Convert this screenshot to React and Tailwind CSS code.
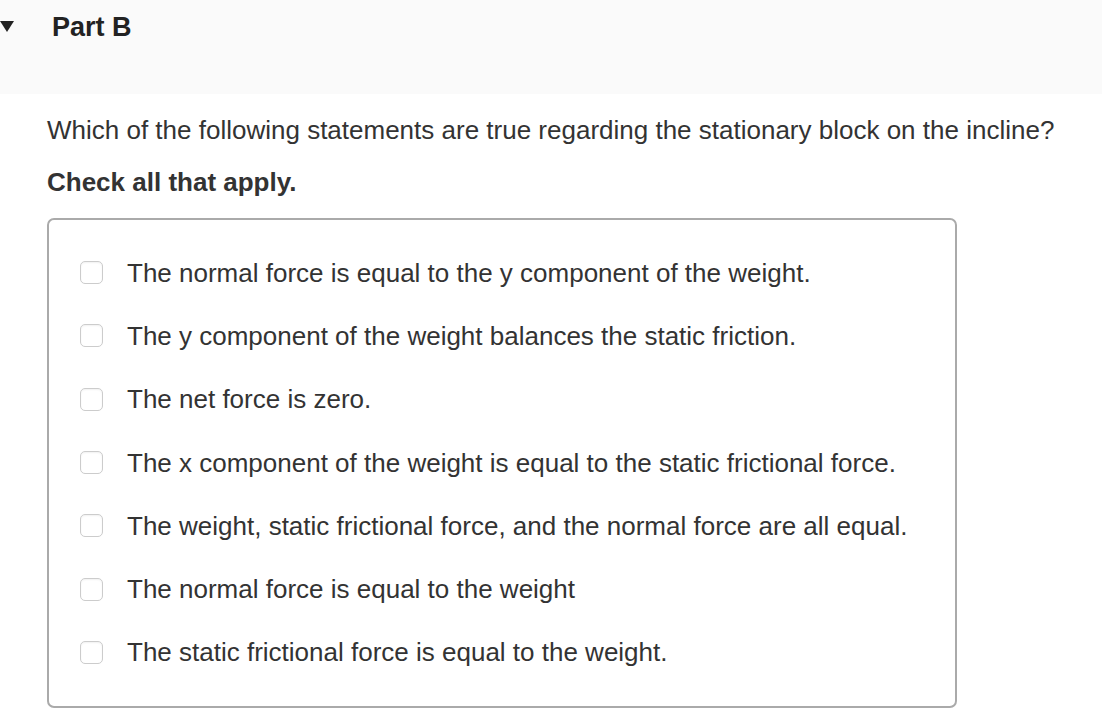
import React from 'react';

const options = [
    'The normal force is equal to the y component of the weight.',
    'The y component of the weight balances the static friction.',
    'The net force is zero.',
    'The x component of the weight is equal to the static frictional force.',
    'The weight, static frictional force, and the normal force are all equal.',
    'The normal force is equal to the weight',
    'The static frictional force is equal to the weight.',
];

const App = () => {
    return (
        <div className="min-h-screen bg-white text-[#333] font-['Liberation_Sans',Arial,sans-serif]">
            {/* Header */}
            <div className="h-[94px] bg-[#fafafa] relative">
                <div className="absolute left-0 top-[21px] w-0 h-0 border-l-[7px] border-r-[7px] border-t-[11px] border-l-transparent border-r-transparent border-t-[#222]"></div>
                <h2 className="pl-[52px] pt-[12px] text-[27px] leading-[30px] font-bold text-[#222]">Part B</h2>
            </div>

            <div className="pl-[47px]">
                <p className="mt-[21px] text-[26px] leading-[30px] whitespace-nowrap">
                    Which of the following statements are true regarding the stationary block on the incline?
                </p>
                <p className="mt-[22px] text-[26px] leading-[30px] font-bold">Check all that apply.</p>

                <div className="mt-[21px] w-[910px] h-[490px] border-2 border-[#aaa] rounded-[7px] pt-[21px]">
                    {options.map((text, i) => (
                        <label key={i} className="flex items-center h-[63.3px] pl-[31px]">
                            <span className="w-[23px] h-[23px] rounded-[5px] border border-[#ccc] bg-white shadow-[inset_0_1px_2px_rgba(0,0,0,0.06)] shrink-0"></span>
                            <span className="ml-[24px] text-[26px] leading-[30px] whitespace-nowrap">{text}</span>
                        </label>
                    ))}
                </div>
            </div>
        </div>
    );
};

export default App;
